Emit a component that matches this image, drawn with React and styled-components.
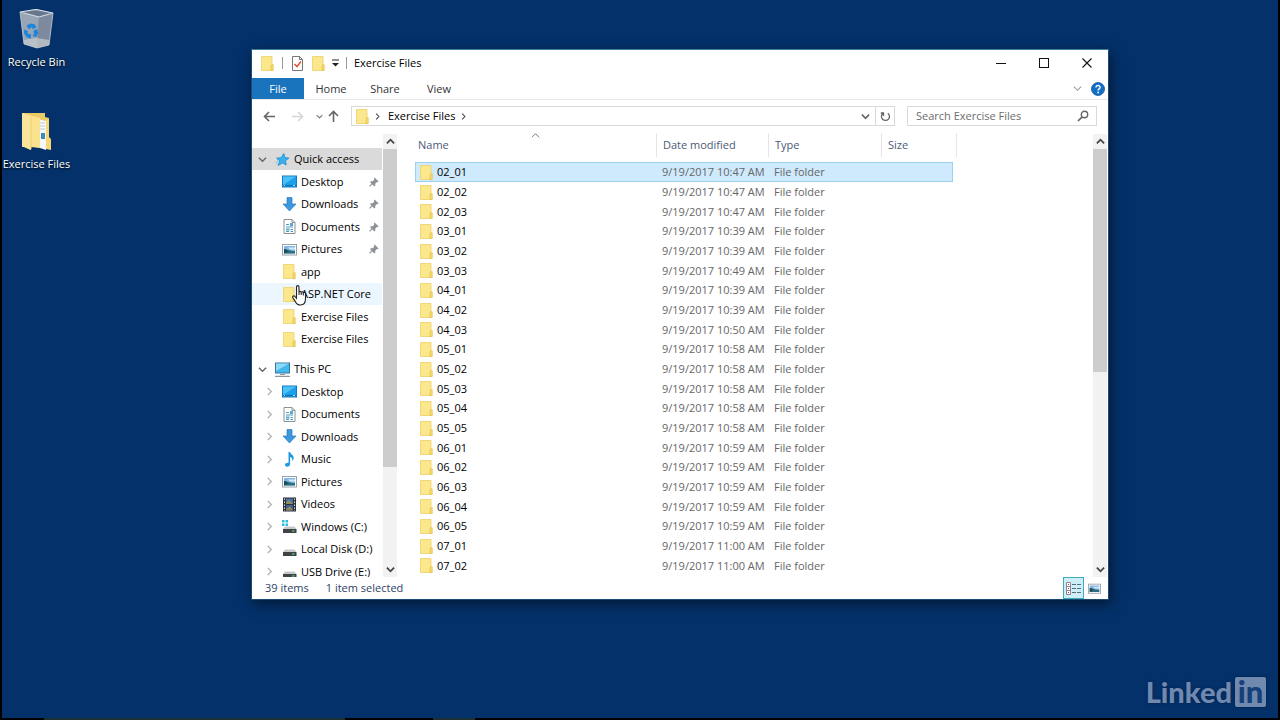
import React, { useState } from "react";
import styled, { createGlobalStyle } from "styled-components";

const GlobalStyle = createGlobalStyle`
  * {
    box-sizing: border-box;
  }

  body {
    margin: 0;
    background: #000;
    font-family: "Open Sans", "Noto Sans", sans-serif;
    font-size: 11px;
    line-height: 16px;
    color: #000;
  }

  button,
  input,
  table {
    font: inherit;
    color: inherit;
  }

  button {
    padding: 0;
    border: none;
    background: none;
  }

  svg {
    display: block;
    flex: none;
  }
`;

const Screen = styled.div`
  display: flex;
  flex-direction: column;
  height: 100vh;
  overflow: hidden;
`;

const Desktop = styled.main`
  position: relative;
  flex: 1;
  margin: 0 2px;
  background: #04316a;
`;

const TaskbarEdge = styled.div`
  display: flex;
  height: 2px;
  padding-left: 44px;
  gap: 88px;
  background: #000;
`;

const TaskbarMark = styled.span`
  width: ${(props) => props.$width}px;
  background: #1c3034;
`;

const Shortcuts = styled.div`
  display: flex;
  flex-direction: column;
  align-items: flex-start;
  gap: 32px;
  padding-top: 9px;
`;

const Shortcut = styled.button`
  display: flex;
  flex-direction: column;
  align-items: center;
  gap: 4px;
  width: 69px;
  height: 70px;
  white-space: nowrap;
  color: #fff;
  text-shadow: 0 1px 2px #000;
`;

const Window = styled.section`
  position: absolute;
  top: 49px;
  right: 169px;
  bottom: 118px;
  left: 249px;
  display: flex;
  flex-direction: column;
  border: 1px solid #1d4a72;
  border-top-color: #3d7f9c;
  background: #fff;
  box-shadow: 2px 4px 12px rgba(0, 0, 0, 0.5);
`;

const TitleBar = styled.header`
  display: flex;
  align-items: center;
  height: 28px;
  padding: 0 0 2px 8px;
`;

const QuickButton = styled.button`
  display: flex;
  margin-right: ${(props) => props.$after || 0}px;
`;

const Divider = styled.span`
  width: 1px;
  height: 12px;
  margin-right: ${(props) => props.$after}px;
  background: #999;
`;

const Title = styled.h1`
  flex: 1;
  margin: 0;
  font-size: 11px;
  font-weight: 400;
`;

const CaptionButton = styled.button`
  display: flex;
  align-items: center;
  justify-content: center;
  width: 43px;
  height: 26px;
`;

const Ribbon = styled.nav`
  display: flex;
  align-items: stretch;
  height: 22px;
  border-bottom: 1px solid #e6e7e8;
`;

const RibbonTab = styled.button`
  min-width: ${(props) => (props.$file ? 52 : 54)}px;
  color: ${(props) => (props.$file ? "#fff" : "#333")};
  background: ${(props) => (props.$file ? "#1a73bd" : "none")};
`;

const RibbonEnd = styled.div`
  display: flex;
  align-items: center;
  gap: 9px;
  margin-left: auto;
  padding-right: 3px;
`;

const AddressRow = styled.div`
  display: flex;
  align-items: center;
  height: 33px;
  padding: 0 11px 1px 9px;
`;

const NavButton = styled.button`
  display: flex;
  justify-content: center;
  width: ${(props) => props.$width}px;
`;

const AddressBox = styled.div`
  display: flex;
  align-items: center;
  flex: 1;
  height: 20px;
  margin: 0 12px 0 6px;
  padding-left: 3px;
  border: 1px solid #d9d9d9;
`;

const Crumb = styled.button`
  margin: 0 4px 0 7px;
`;

const AddressButton = styled.button`
  display: flex;
  align-items: center;
  justify-content: center;
  width: 19px;
  height: 18px;
  margin-left: ${(props) => (props.$first ? "auto" : 0)};
  border-left: ${(props) => (props.$first ? "none" : "1px solid #d9d9d9")};
`;

const SearchBox = styled.label`
  display: flex;
  align-items: center;
  width: 190px;
  height: 20px;
  padding: 0 7px 0 8px;
  border: 1px solid #d9d9d9;
`;

const SearchInput = styled.input`
  flex: 1;
  min-width: 0;
  padding: 0;
  border: none;
  outline: none;
  background: none;

  &::placeholder {
    color: #6d6d6d;
    opacity: 1;
  }
`;

const Body = styled.div`
  display: flex;
  flex: 1;
  min-height: 0;
`;

const Sidebar = styled.aside`
  width: 131px;
  padding: 15px 1px 0 0;
  overflow: hidden;
`;

const Tree = styled.ul`
  margin: 0 0 8px;
  padding: 0;
  list-style: none;
`;

const TreeItem = styled.li`
  display: flex;
  align-items: center;
  height: 22px;
  padding-left: ${(props) => (props.$root ? 5 : 12)}px;
  white-space: nowrap;
  background: ${(props) => props.$fill || "none"};

  &:nth-child(even) {
    height: 23px;
  }
`;

const Toggle = styled.span`
  display: flex;
  justify-content: center;
  width: 11px;
  margin-right: 7px;
`;

const Pin = styled.span`
  margin-right: 3px;
`;

const TreeLabel = styled.span`
  flex: 1;
  margin-left: 4px;
`;

const ScrollBar = styled.div`
  display: flex;
  flex-direction: column;
  width: 14px;
  margin: 1px ${(props) => (props.$end ? "1px 0 auto" : "0 0")};
  background: #f2f2f2;
`;

const ScrollTrack = styled.div`
  flex: 1;
`;

const ScrollThumb = styled.div`
  height: ${(props) => props.$share}%;
  background: #cdcdcd;
`;

const ScrollButton = styled.button`
  display: flex;
  align-items: center;
  justify-content: center;
  height: 15px;
`;

const FilePane = styled.div`
  flex: 1;
  padding-left: 18px;
  overflow: hidden;
`;

const FileTable = styled.table`
  width: 542px;
  table-layout: fixed;
  border-collapse: separate;
  border-spacing: 0;
  line-height: 16px;
`;

const HeadCell = styled.th`
  position: relative;
  width: ${(props) => props.$width}px;
  height: 24px;
  padding: 0 0 0 ${(props) => (props.$first ? 3 : 6)}px;
  border-right: 1px solid #e6e6e6;
  font-weight: 400;
  text-align: left;
  color: #4c5a75;
`;

const SortMark = styled.span`
  position: absolute;
  top: -2px;
  right: 0;
  left: 0;
  display: flex;
  justify-content: center;
`;

const Spacer = styled.tr`
  height: 5px;
`;

const FileRow = styled.tr`
  height: 20px;
  color: #666;

  &:nth-child(3n) {
    height: 19px;
  }
`;

const edge = "#9bd0ee";

const FileCell = styled.td`
  padding: 0 0 0 5px;
  background: ${(props) => (props.$selected ? "#cfeafc" : "none")};
  box-shadow: ${(props) =>
    props.$selected ? `inset 0 1px ${edge}, inset 0 -1px ${edge}` : "none"};

  &:first-child {
    padding-left: 4px;
    color: #000;
    box-shadow: ${(props) =>
      props.$selected
        ? `inset 1px 0 ${edge}, inset 0 1px ${edge}, inset 0 -1px ${edge}`
        : "none"};
  }

  &:last-child {
    border-right: 4px solid transparent;
    background-clip: padding-box;
    box-shadow: ${(props) =>
      props.$selected
        ? `inset -1px 0 ${edge}, inset 0 1px ${edge}, inset 0 -1px ${edge}`
        : "none"};
  }
`;

const FileName = styled.span`
  display: flex;
  align-items: center;
  gap: 3px;
`;

const StatusBar = styled.footer`
  display: flex;
  align-items: center;
  gap: 17px;
  height: 22px;
  padding-left: 13px;
  color: #2e3f66;
`;

const ViewButtons = styled.div`
  display: flex;
  margin-left: auto;
  padding-right: 3px;
`;

const ViewButton = styled.button`
  display: flex;
  align-items: center;
  justify-content: center;
  width: 21px;
  height: 22px;
  border: 1px solid ${(props) => (props.$on ? "#3fa9bd" : "transparent")};
  background: ${(props) => (props.$on ? "#cdeef7" : "none")};
`;

const Brand = styled.div`
  position: absolute;
  right: 12px;
  bottom: 11px;
  display: flex;
  align-items: center;
  gap: 3px;
  font-family: Lato, sans-serif;
  font-size: 29px;
  font-weight: 900;
  line-height: 28px;
  color: #7089ae;
  text-shadow: 0 0 3px rgba(0, 20, 50, 0.6);
`;

const BrandBox = styled.span`
  width: 31px;
  height: 30px;
  border-radius: 2px;
  text-align: center;
  font-size: 31px;
  color: #16407a;
  background: #7089ae;
  box-shadow: 0 0 3px rgba(0, 20, 50, 0.6);
  text-shadow: none;
`;

const Pointer = styled.span`
  position: absolute;
  top: 285px;
  left: 290px;
`;

const Chevron = ({ dir = "right", size = 9, color = "#666", weight = 1.5 }) => {
  const turn = { right: 0, down: 90, left: 180, up: 270 }[dir];
  return (
    <svg width={size} height={size} viewBox="0 0 10 10">
      <path
        d="M3 1l4 4-4 4"
        fill="none"
        stroke={color}
        strokeWidth={weight}
        transform={`rotate(${turn} 5 5)`}
      />
    </svg>
  );
};

const Arrow = ({ turn = 0, color = "#666" }) => (
  <svg width="13" height="13" viewBox="0 0 13 13">
    <path
      d="M12 6.5H1.5M6 2L1.5 6.5 6 11"
      fill="none"
      stroke={color}
      strokeWidth="1.6"
      transform={`rotate(${turn} 6.5 6.5)`}
    />
  </svg>
);

const FolderIcon = ({ size = 15 }) => (
  <svg width={size} height={size} viewBox="0 0 15 15">
    <path
      d="M1.5.5h10.5v14H1.5z"
      fill="#fbe78c"
      stroke="#efd372"
      strokeWidth=".9"
    />
    <path
      d="M11 9.500l1-.8h1.200v5.800h-2.200z"
      fill="#f9de6e"
      stroke="#e5c04f"
      strokeWidth=".8"
    />
  </svg>
);

const CheckPageIcon = () => (
  <svg width="13" height="15" viewBox="0 0 13 15">
    <path d="M1.500.5h7L11.500 3.500v11h-10z" fill="#fff" stroke="#777" />
    <path d="M8.500.5v3h3" fill="none" stroke="#777" />
    <path d="M3.500 8l2.500 2.500 4-5" fill="none" stroke="#dd5a35" strokeWidth="1.600" />
  </svg>
);

const StarIcon = () => (
  <svg width="15" height="15" viewBox="0 0 15 15">
    <path
      d="M8.800 1.500l1 4.100 4.200.5-3.500 2.600.7 4.300-3.700-2.100-4.300 2.600 1.700-4.600L1.500 6.200l4.600-.5z"
      fill="#37b2f0"
      stroke="#2088c9"
      strokeWidth=".8"
    />
    <path d="M1 12l3-2M.8 9.800l2.200-1" stroke="#74bfe8" strokeWidth=".8" />
  </svg>
);

const DesktopIcon = () => (
  <svg width="15" height="15" viewBox="0 0 15 15">
    <rect x=".5" y="2" width="14" height="11" fill="#1ba1ea" stroke="#1579bd" />
    <path d="M1 2.500h13L1 11z" fill="#4cc0f7" />
    <path d="M1 11.500h13" stroke="#0d6cab" />
    <path d="M2 11.500h1M11 11.500h2" stroke="#9fe0ff" />
  </svg>
);

const DownloadIcon = () => (
  <svg width="15" height="15" viewBox="0 0 15 15">
    <path d="M5 .5h5v6.500h4L7.500 14 1 7h4z" fill="#3e97dc" stroke="#2d7cc0" strokeWidth=".7" />
  </svg>
);

const DocumentIcon = () => (
  <svg width="15" height="15" viewBox="0 0 15 15">
    <path d="M2 .5h8l3 3v11H2z" fill="#fff" stroke="#8a9299" />
    <path d="M10 .5v3h3" fill="none" stroke="#8a9299" />
    <path d="M4 5.500h3M4 8h7M4 12.500h3M8.500 10.500H11M8.500 12.500H11" stroke="#4a9dbf" />
    <path d="M8 4h3v3H8zM4 9.500h3.500v2H4z" fill="#58a9cc" />
  </svg>
);

const PictureIcon = ({ width = 15 }) => (
  <svg width={width} height={width} viewBox="0 0 15 15">
    <rect x=".5" y="2.500" width="14" height="10.500" fill="#fff" stroke="#9a9fa8" />
    <rect x="2" y="4" width="11" height="7.500" fill="#7fb6ea" />
    <path d="M6 5.500h7v2H8z" fill="#d6e8f5" />
    <path d="M2 7c3 0 5 2 11 2v2.500H2z" fill="#2b6d7c" />
    <path d="M2 7c2 0 3 1 4 2.500L2 11.500z" fill="#1f4d55" />
  </svg>
);

const ComputerIcon = () => (
  <svg width="15" height="15" viewBox="0 0 15 15">
    <rect x=".5" y="1" width="14" height="10" fill="#42b8ef" stroke="#37789f" />
    <path d="M1 1.500h13L1 9z" fill="#8cd9f8" />
    <path d="M5 12.500h5M0 14.300h15" stroke="#8e979e" strokeWidth="1.200" />
  </svg>
);

const MusicIcon = () => (
  <svg width="15" height="15" viewBox="0 0 15 15">
    <path
      d="M6.500 0h1.600c.3 2.400 3.900 3.200 3.600 6.200-.1 1.400-.8 2.300-1.500 2.900.7-2.300-.4-3.500-2.100-4.100v7c0 1.600-1.300 2.600-2.900 2.700-1.500 0-2.300-.8-2.200-1.900.1-1.300 1.700-2.300 3.500-1.900z"
      fill="#1e9be0"
    />
  </svg>
);

const VideoIcon = () => (
  <svg width="15" height="15" viewBox="0 0 15 15">
    <rect x="1" y=".5" width="13" height="14" fill="#2f3136" />
    <path d="M4 1.500h7v5.500H4z" fill="#4773a8" />
    <path d="M4 8h7v5.500H4z" fill="#3a5fa0" />
    <path d="M4 5l3-2 4 4H4zM4 12l4-3 3 4.500H4z" fill="#8f8a5c" />
    <path
      d="M2.500 1.500v12.500M12.500 1.500v12.500"
      stroke="#d8d8d8"
      strokeDasharray="1.500 1.500"
    />
  </svg>
);

const DriveIcon = ({ system }) => (
  <svg width="15" height="15" viewBox="0 0 15 15">
    <path d="M3 7.500h9.500L14.500 10H1z" fill="#c6c9cc" />
    <rect x="1" y="10" width="13.500" height="4" fill="#3e4348" />
    <path d="M10 12h2.500" stroke="#4ed06a" strokeWidth="1.300" />
    {system && (
      <path d="M0 1h2.500v2.500H0zM3.500 1H6v2.500H3.500zM0 4.500h2.500V7H0zM3.500 4.500H6V7H3.500z" fill="#2bbcd8" />
    )}
  </svg>
);

const PinIcon = () => (
  <svg width="10" height="10" viewBox="0 0 10 10">
    <path d="M5.600.4l4 4-1 .9-.8-.2-1.600 1.700.1 1.800-.9.9L1 5l.9-.8 1.900.1L5.300 2.600 5 1.400z" fill="#8b9196" />
    <path d="M3.200 6.600L.5 9.400" stroke="#8b9196" strokeWidth="1.100" />
  </svg>
);

const BinIcon = () => (
  <svg width="38" height="41" viewBox="0 0 38 41">
    <path d="M2 3l16-3 17 4-4 32-12 3L6 35z" fill="#8794a6" />
    <path d="M2 3l19 5-2 31L6 35z" fill="#98a5b5" />
    <path d="M21 8l14-4-4 32-12 3z" fill="#7d8a9d" />
    <path d="M5.500 31l13-2 13 2-.5 5-12 3L6 35z" fill="#c8ccce" opacity=".7" />
    <path d="M2 3l16-2.500L35 4 21 8z" fill="#68788c" stroke="#d7dde3" strokeWidth="1.200" />
    <path d="M2 3l4 32 13 4 12-3 4-32" fill="none" stroke="#bcc5cf" strokeWidth=".8" />
    <g fill="#1d86dc">
      <path d="M8.500 16.500l4-2 4.500 1 1.500 3-4 1.500-1-2-2.500 2.500z" />
      <path d="M15.500 21.500l3.500-1.500 1.500 4-2.500 4-3.500-1 1.500-2z" />
      <path d="M6 20.500l4 1.500-.5 2.500 3.500 1v4l-4-1-3-4z" />
    </g>
  </svg>
);

const OpenFolderIcon = () => (
  <svg width="38" height="41" viewBox="0 0 38 41">
    <path d="M4 2h23v4l4 1v19l2 2v10l-4-2L4 36z" fill="#e9cb68" />
    <path d="M19 8l9 2v29l-9-3z" fill="#f5f8fa" />
    <path d="M22 12h5M22 15h5M22 18h5" stroke="#c1ccd4" />
    <path d="M23 22h4v6h-4z" fill="#3d8fb2" />
    <path d="M4 2l18 5v30L13 36v3L4 35z" fill="#fbe28e" />
    <path d="M4 2l9 4v33l-9-4z" fill="#f9e59a" />
    <path d="M13 6v32" stroke="#e9cd70" />
    <path d="M28 8l3 1v18l2 2v10l-5-1z" fill="#f8d874" />
  </svg>
);

const shortcuts = [
  { label: "Recycle Bin", icon: <BinIcon /> },
  { label: "Exercise Files", icon: <OpenFolderIcon /> },
];

const quickAccess = [
  { label: "Desktop", icon: <DesktopIcon />, pinned: true },
  { label: "Downloads", icon: <DownloadIcon />, pinned: true },
  { label: "Documents", icon: <DocumentIcon />, pinned: true },
  { label: "Pictures", icon: <PictureIcon />, pinned: true },
  { label: "app", icon: <FolderIcon /> },
  { label: "ASP.NET Core", icon: <FolderIcon />, hover: true },
  { label: "Exercise Files", icon: <FolderIcon /> },
  { label: "Exercise Files", icon: <FolderIcon /> },
];

const thisPc = [
  { label: "Desktop", icon: <DesktopIcon /> },
  { label: "Documents", icon: <DocumentIcon /> },
  { label: "Downloads", icon: <DownloadIcon /> },
  { label: "Music", icon: <MusicIcon /> },
  { label: "Pictures", icon: <PictureIcon /> },
  { label: "Videos", icon: <VideoIcon /> },
  { label: "Windows (C:)", icon: <DriveIcon system /> },
  { label: "Local Disk (D:)", icon: <DriveIcon /> },
  { label: "USB Drive (E:)", icon: <DriveIcon /> },
];

const files = [
  ["02_01", "10:47"],
  ["02_02", "10:47"],
  ["02_03", "10:47"],
  ["03_01", "10:39"],
  ["03_02", "10:39"],
  ["03_03", "10:49"],
  ["04_01", "10:39"],
  ["04_02", "10:39"],
  ["04_03", "10:50"],
  ["05_01", "10:58"],
  ["05_02", "10:58"],
  ["05_03", "10:58"],
  ["05_04", "10:58"],
  ["05_05", "10:58"],
  ["06_01", "10:59"],
  ["06_02", "10:59"],
  ["06_03", "10:59"],
  ["06_04", "10:59"],
  ["06_05", "10:59"],
  ["07_01", "11:00"],
  ["07_02", "11:00"],
];

const Scroll = ({ share, end }) => (
  <ScrollBar $end={end}>
    <ScrollButton aria-label="Scroll up">
      <Chevron dir="up" color="#444" weight={2} />
    </ScrollButton>
    <ScrollTrack>
      <ScrollThumb $share={share} />
    </ScrollTrack>
    <ScrollButton aria-label="Scroll down">
      <Chevron dir="down" color="#444" weight={2} />
    </ScrollButton>
  </ScrollBar>
);

const TreeGroup = ({ label, icon, items, fill, expandable }) => (
  <Tree>
    <TreeItem $root $fill={fill}>
      <Toggle>
        <Chevron dir="down" />
      </Toggle>
      {icon}
      <TreeLabel>{label}</TreeLabel>
    </TreeItem>
    {items.map((item, i) => (
      <TreeItem key={i} $fill={item.hover ? "#ebf6fe" : undefined}>
        <Toggle>{expandable && <Chevron color="#aaa" weight={1.3} />}</Toggle>
        {item.icon}
        <TreeLabel>{item.label}</TreeLabel>
        {item.pinned && (
          <Pin>
            <PinIcon />
          </Pin>
        )}
      </TreeItem>
    ))}
  </Tree>
);

const App = () => {
  const [selected, setSelected] = useState("02_01");
  const [query, setQuery] = useState("");

  return (
    <Screen>
      <GlobalStyle />
      <Desktop>
        <Shortcuts>
          {shortcuts.map((item) => (
            <Shortcut key={item.label}>
              {item.icon}
              {item.label}
            </Shortcut>
          ))}
        </Shortcuts>

        <Window>
          <TitleBar>
            <QuickButton aria-label="Window menu" $after={7}>
              <FolderIcon />
            </QuickButton>
            <Divider $after={8} />
            <QuickButton aria-label="Properties" $after={7}>
              <CheckPageIcon />
            </QuickButton>
            <QuickButton aria-label="New folder" $after={6}>
              <FolderIcon />
            </QuickButton>
            <QuickButton aria-label="Customize toolbar" $after={7}>
              <svg width="7" height="8" viewBox="0 0 7 8">
                <path d="M0 1h7" stroke="#222" />
                <path d="M0 4h7L3.500 7.500z" fill="#222" />
              </svg>
            </QuickButton>
            <Divider $after={7} />
            <Title>Exercise Files</Title>
            <CaptionButton aria-label="Minimize">
              <svg width="10" height="10" viewBox="0 0 10 10">
                <path d="M0 5.500h10" stroke="#111" />
              </svg>
            </CaptionButton>
            <CaptionButton aria-label="Maximize">
              <svg width="10" height="10" viewBox="0 0 10 10">
                <rect x=".5" y=".5" width="9" height="9" fill="none" stroke="#111" />
              </svg>
            </CaptionButton>
            <CaptionButton aria-label="Close">
              <svg width="10" height="10" viewBox="0 0 10 10">
                <path d="M.5.5l9 9M9.500.5l-9 9" stroke="#111" strokeWidth="1.100" />
              </svg>
            </CaptionButton>
          </TitleBar>

          <Ribbon>
            <RibbonTab $file>File</RibbonTab>
            <RibbonTab>Home</RibbonTab>
            <RibbonTab>Share</RibbonTab>
            <RibbonTab>View</RibbonTab>
            <RibbonEnd>
              <Chevron dir="down" color="#999" weight={1.2} />
              <svg width="14" height="14" viewBox="0 0 14 14">
                <circle cx="7" cy="7" r="6.500" fill="#1270c4" stroke="#0b559b" strokeWidth=".8" />
                <path
                  d="M5 5.400c0-2.700 4.200-2.500 4.100 0 0 1.400-2 1.500-2 3"
                  fill="none"
                  stroke="#fff"
                  strokeWidth="1.400"
                />
                <circle cx="7.100" cy="10.500" r=".9" fill="#fff" />
              </svg>
            </RibbonEnd>
          </Ribbon>

          <AddressRow>
            <NavButton $width={16} aria-label="Back">
              <Arrow />
            </NavButton>
            <NavButton $width={40} aria-label="Forward">
              <Arrow turn={180} color="#d6d6d6" />
            </NavButton>
            <NavButton $width={4} aria-label="Recent locations">
              <Chevron dir="down" size={7} color="#777" />
            </NavButton>
            <NavButton $width={24} aria-label="Up">
              <Arrow turn={90} />
            </NavButton>
            <AddressBox>
              <QuickButton aria-label="Location" $after={4}>
                <FolderIcon />
              </QuickButton>
              <Chevron size={7} color="#444" />
              <Crumb>Exercise Files</Crumb>
              <Chevron size={7} color="#444" />
              <AddressButton $first aria-label="Previous locations">
                <Chevron dir="down" weight={1.9} />
              </AddressButton>
              <AddressButton aria-label="Refresh">
                <svg width="11" height="11" viewBox="0 0 11 11">
                  <path
                    d="M7.800 2.200A4 4 0 1 1 3 2.300M3.500 5V2H.8"
                    fill="none"
                    stroke="#666"
                    strokeWidth="1.300"
                  />
                </svg>
              </AddressButton>
            </AddressBox>
            <SearchBox>
              <SearchInput
                type="text"
                aria-label="Search Exercise Files"
                placeholder="Search Exercise Files"
                value={query}
                onChange={(e) => setQuery(e.target.value)}
              />
              <svg width="12" height="12" viewBox="0 0 12 12">
                <circle cx="7.500" cy="4.500" r="3.200" fill="none" stroke="#666" strokeWidth="1.400" />
                <path d="M5.200 6.800L1 11" stroke="#666" strokeWidth="1.700" />
              </svg>
            </SearchBox>
          </AddressRow>

          <Body>
            <Sidebar>
              <TreeGroup
                label="Quick access"
                icon={<StarIcon />}
                items={quickAccess}
                fill="#dadada"
              />
              <TreeGroup
                label="This PC"
                icon={<ComputerIcon />}
                items={thisPc}
                expandable
              />
            </Sidebar>
            <Scroll share={77} />

            <FilePane>
              <FileTable>
                <thead>
                  <tr>
                    <HeadCell $first $width={242}>
                      Name
                      <SortMark>
                        <Chevron dir="up" color="#777" weight={1.1} />
                      </SortMark>
                    </HeadCell>
                    <HeadCell $width={112}>Date modified</HeadCell>
                    <HeadCell $width={113}>Type</HeadCell>
                    <HeadCell $width={75}>Size</HeadCell>
                  </tr>
                  <Spacer />
                </thead>
                <tbody>
                  {files.map(([name, time]) => {
                    const on = name === selected;
                    return (
                      <FileRow key={name} onClick={() => setSelected(name)}>
                        <FileCell $selected={on}>
                          <FileName>
                            <FolderIcon />
                            {name}
                          </FileName>
                        </FileCell>
                        <FileCell $selected={on}>9/19/2017 {time} AM</FileCell>
                        <FileCell $selected={on}>File folder</FileCell>
                        <FileCell $selected={on} />
                      </FileRow>
                    );
                  })}
                </tbody>
              </FileTable>
            </FilePane>
            <Scroll share={54} end />
          </Body>

          <StatusBar>
            <span>39 items</span>
            <span>1 item selected</span>
            <ViewButtons>
              <ViewButton $on aria-label="Details view">
                <svg width="15" height="13" viewBox="0 0 15 13">
                  <path
                    d="M.5.5h4v12h-4zM.5 4.500h4M.5 8.500h4"
                    fill="#fff"
                    stroke="#97838f"
                  />
                  <path d="M2 2.500h1M2 6.500h1M2 10.500h1" stroke="#a04848" />
                  <path
                    d="M6 2.500h4M11 2.500h4M6 6.500h4M11 6.500h4M6 10.500h4M11 10.500h4"
                    stroke="#56707a"
                  />
                </svg>
              </ViewButton>
              <ViewButton aria-label="Large icons view">
                <PictureIcon width={13} />
              </ViewButton>
            </ViewButtons>
          </StatusBar>
        </Window>

        <Pointer>
          <svg width="16" height="21" viewBox="0 0 16 21">
            <path
              d="M4.500 2c0-1.800 2.500-1.800 2.500 0v5c.3-1 2-.9 2.200.3.500-.9 2-.6 2.100.5.600-.8 2.200-.4 2.200 1v5c0 3.500-1.600 6.200-5 6.200-3 0-4.200-1.600-5.200-3.600L.9 12.800c-.8-1.500.8-2.600 2-1.300l1.600 1.800z"
              fill="#fff"
              stroke="#222"
              strokeWidth="1.100"
            />
            <path d="M7 7v3M9.200 7.500V10M11.300 8v2.500" stroke="#222" />
          </svg>
        </Pointer>

        <Brand>
          Linked<BrandBox>in</BrandBox>
        </Brand>
      </Desktop>
      <TaskbarEdge>
        <TaskbarMark $width={301} />
        <TaskbarMark $width={42} />
      </TaskbarEdge>
    </Screen>
  );
};

export default App;
